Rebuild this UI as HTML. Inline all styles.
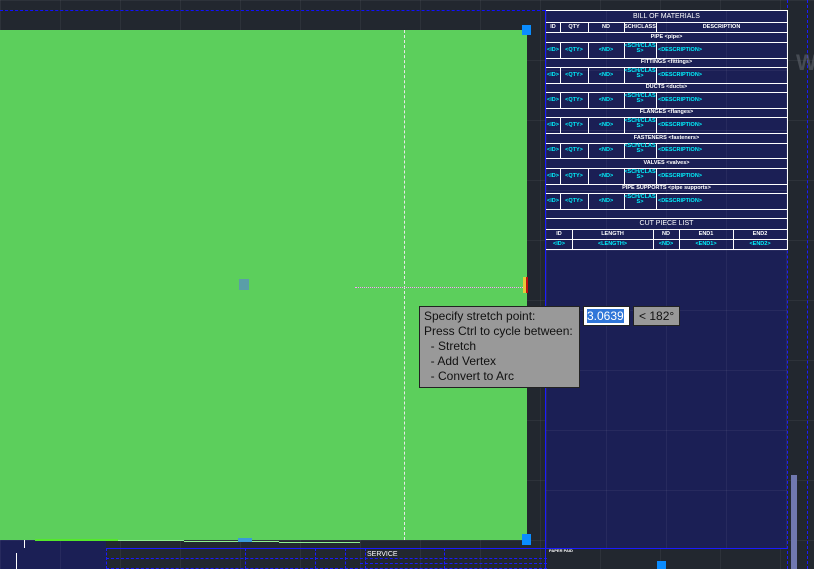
<!DOCTYPE html>
<html><head><meta charset="utf-8"><style>
*{margin:0;padding:0;box-sizing:border-box}
body{width:814px;height:569px;overflow:hidden;background:#22272f;position:relative;font-family:"Liberation Sans",sans-serif}
.a{position:absolute}
.grid{background-image:linear-gradient(90deg,rgba(255,255,255,.05) 1px,transparent 1px),linear-gradient(rgba(255,255,255,.05) 1px,transparent 1px);background-size:60px 60px}
.green{background-color:#5ccf5c}
.h{position:absolute;left:546px;width:241px;height:1px;background:#fff}
.v{position:absolute;width:1px;background:#fff}
.t{position:absolute;color:#fff;font-size:5.5px;font-weight:bold;text-align:center;line-height:10px;white-space:nowrap}
.c{position:absolute;color:#00f4ff;font-size:5.5px;font-weight:bold;text-align:center;line-height:5px;white-space:nowrap}
.tip{font-size:12px;color:#111;line-height:15px;white-space:nowrap}
</style></head><body>
<div class="a grid" style="left:0;top:0;width:814px;height:569px"></div>
<div class="a" style="left:0;top:10px;width:545px;height:1px;border-top:1px dashed #1010ff"></div>
<div class="a grid" style="left:546px;top:10px;width:241px;height:538px;background-color:#1b1f55"></div>
<div class="a" style="left:545px;top:10px;width:1px;height:559px;background:#1a1aff"></div>
<div class="a" style="left:787px;top:0;width:1px;height:569px;border-left:1px dashed #1a1aff"></div>
<div class="a" style="left:807px;top:0;width:1px;height:569px;border-left:1px dashed #1a1aff"></div>
<div class="a" style="left:791px;top:475px;width:6px;height:94px;background:#7078b0"></div>
<div class="a" style="left:796px;top:50px;font-size:22px;font-weight:bold;color:#6a6f78;opacity:.5">W</div>
<div class="h" style="top:10px"></div>
<div class="h" style="top:22px"></div><div class="h" style="top:32px"></div><div class="h" style="top:42px"></div><div class="h" style="top:58px"></div><div class="h" style="top:67px"></div><div class="h" style="top:83px"></div><div class="h" style="top:92px"></div><div class="h" style="top:108px"></div><div class="h" style="top:117px"></div><div class="h" style="top:133px"></div><div class="h" style="top:143px"></div><div class="h" style="top:158px"></div><div class="h" style="top:168px"></div><div class="h" style="top:184px"></div><div class="h" style="top:193px"></div><div class="h" style="top:209px"></div>
<div class="h" style="top:218px"></div><div class="h" style="top:229px"></div><div class="h" style="top:239px"></div><div class="h" style="top:249px"></div>
<div class="v" style="left:787px;top:10px;height:240px"></div>
<div class="v" style="left:560px;top:22px;height:10px"></div><div class="v" style="left:588px;top:22px;height:10px"></div><div class="v" style="left:624px;top:22px;height:10px"></div><div class="v" style="left:656px;top:22px;height:10px"></div>
<div class="v" style="left:560px;top:42px;height:16px"></div><div class="v" style="left:588px;top:42px;height:16px"></div><div class="v" style="left:624px;top:42px;height:16px"></div><div class="v" style="left:656px;top:42px;height:16px"></div>
<div class="v" style="left:560px;top:67px;height:16px"></div><div class="v" style="left:588px;top:67px;height:16px"></div><div class="v" style="left:624px;top:67px;height:16px"></div><div class="v" style="left:656px;top:67px;height:16px"></div>
<div class="v" style="left:560px;top:92px;height:16px"></div><div class="v" style="left:588px;top:92px;height:16px"></div><div class="v" style="left:624px;top:92px;height:16px"></div><div class="v" style="left:656px;top:92px;height:16px"></div>
<div class="v" style="left:560px;top:117px;height:16px"></div><div class="v" style="left:588px;top:117px;height:16px"></div><div class="v" style="left:624px;top:117px;height:16px"></div><div class="v" style="left:656px;top:117px;height:16px"></div>
<div class="v" style="left:560px;top:143px;height:15px"></div><div class="v" style="left:588px;top:143px;height:15px"></div><div class="v" style="left:624px;top:143px;height:15px"></div><div class="v" style="left:656px;top:143px;height:15px"></div>
<div class="v" style="left:560px;top:168px;height:16px"></div><div class="v" style="left:588px;top:168px;height:16px"></div><div class="v" style="left:624px;top:168px;height:16px"></div><div class="v" style="left:656px;top:168px;height:16px"></div>
<div class="v" style="left:560px;top:193px;height:16px"></div><div class="v" style="left:588px;top:193px;height:16px"></div><div class="v" style="left:624px;top:193px;height:16px"></div><div class="v" style="left:656px;top:193px;height:16px"></div>
<div class="v" style="left:572px;top:229px;height:20px"></div><div class="v" style="left:653px;top:229px;height:20px"></div><div class="v" style="left:679px;top:229px;height:20px"></div><div class="v" style="left:733px;top:229px;height:20px"></div>
<div class="t" style="left:546px;width:241px;top:11px;font-size:7px;font-weight:normal;line-height:11px">BILL OF MATERIALS</div>
<div class="t" style="left:546px;width:14px;top:22px">ID</div><div class="t" style="left:560px;width:28px;top:22px">QTY</div><div class="t" style="left:588px;width:36px;top:22px">ND</div><div class="t" style="left:624px;width:32px;top:22px">SCH/CLASS</div><div class="t" style="left:656px;width:131px;top:22px">DESCRIPTION</div>
<div class="t" style="left:546px;width:241px;top:32px">PIPE &lt;pipe&gt;</div>
<div class="t" style="left:546px;width:241px;top:58px;line-height:9px">FITTINGS &lt;fittings&gt;</div>
<div class="t" style="left:546px;width:241px;top:83px;line-height:9px">DUCTS &lt;ducts&gt;</div>
<div class="t" style="left:546px;width:241px;top:108px;line-height:9px">FLANGES &lt;flanges&gt;</div>
<div class="t" style="left:546px;width:241px;top:133px">FASTENERS &lt;fasteners&gt;</div>
<div class="t" style="left:546px;width:241px;top:158px">VALVES &lt;valves&gt;</div>
<div class="t" style="left:546px;width:241px;top:184px;line-height:9px">PIPE SUPPORTS &lt;pipe supports&gt;</div>
<div class="c" style="left:546px;width:14px;top:48px">&lt;ID&gt;</div><div class="c" style="left:560px;width:28px;top:48px">&lt;QTY&gt;</div><div class="c" style="left:588px;width:36px;top:48px">&lt;ND&gt;</div><div class="c" style="left:624px;width:32px;top:44px">&lt;SCH/CLAS<br>S&gt;</div><div class="c" style="left:658px;top:48px">&lt;DESCRIPTION&gt;</div>
<div class="c" style="left:546px;width:14px;top:73px">&lt;ID&gt;</div><div class="c" style="left:560px;width:28px;top:73px">&lt;QTY&gt;</div><div class="c" style="left:588px;width:36px;top:73px">&lt;ND&gt;</div><div class="c" style="left:624px;width:32px;top:69px">&lt;SCH/CLAS<br>S&gt;</div><div class="c" style="left:658px;top:73px">&lt;DESCRIPTION&gt;</div>
<div class="c" style="left:546px;width:14px;top:98px">&lt;ID&gt;</div><div class="c" style="left:560px;width:28px;top:98px">&lt;QTY&gt;</div><div class="c" style="left:588px;width:36px;top:98px">&lt;ND&gt;</div><div class="c" style="left:624px;width:32px;top:94px">&lt;SCH/CLAS<br>S&gt;</div><div class="c" style="left:658px;top:98px">&lt;DESCRIPTION&gt;</div>
<div class="c" style="left:546px;width:14px;top:123px">&lt;ID&gt;</div><div class="c" style="left:560px;width:28px;top:123px">&lt;QTY&gt;</div><div class="c" style="left:588px;width:36px;top:123px">&lt;ND&gt;</div><div class="c" style="left:624px;width:32px;top:119px">&lt;SCH/CLAS<br>S&gt;</div><div class="c" style="left:658px;top:123px">&lt;DESCRIPTION&gt;</div>
<div class="c" style="left:546px;width:14px;top:148px">&lt;ID&gt;</div><div class="c" style="left:560px;width:28px;top:148px">&lt;QTY&gt;</div><div class="c" style="left:588px;width:36px;top:148px">&lt;ND&gt;</div><div class="c" style="left:624px;width:32px;top:144px">&lt;SCH/CLAS<br>S&gt;</div><div class="c" style="left:658px;top:148px">&lt;DESCRIPTION&gt;</div>
<div class="c" style="left:546px;width:14px;top:174px">&lt;ID&gt;</div><div class="c" style="left:560px;width:28px;top:174px">&lt;QTY&gt;</div><div class="c" style="left:588px;width:36px;top:174px">&lt;ND&gt;</div><div class="c" style="left:624px;width:32px;top:170px">&lt;SCH/CLAS<br>S&gt;</div><div class="c" style="left:658px;top:174px">&lt;DESCRIPTION&gt;</div>
<div class="c" style="left:546px;width:14px;top:199px">&lt;ID&gt;</div><div class="c" style="left:560px;width:28px;top:199px">&lt;QTY&gt;</div><div class="c" style="left:588px;width:36px;top:199px">&lt;ND&gt;</div><div class="c" style="left:624px;width:32px;top:195px">&lt;SCH/CLAS<br>S&gt;</div><div class="c" style="left:658px;top:199px">&lt;DESCRIPTION&gt;</div>
<div class="t" style="left:546px;width:241px;top:219px;font-size:7px;font-weight:normal;line-height:10px">CUT PIECE LIST</div>
<div class="t" style="left:546px;width:26px;top:229px">ID</div><div class="t" style="left:572px;width:81px;top:229px">LENGTH</div><div class="t" style="left:653px;width:26px;top:229px">ND</div><div class="t" style="left:679px;width:54px;top:229px">END1</div><div class="t" style="left:733px;width:54px;top:229px">END2</div>
<div class="c" style="left:546px;width:26px;top:242px">&lt;ID&gt;</div><div class="c" style="left:572px;width:81px;top:242px">&lt;LENGTH&gt;</div><div class="c" style="left:653px;width:26px;top:242px">&lt;ND&gt;</div><div class="c" style="left:679px;width:54px;top:242px">&lt;END1&gt;</div><div class="c" style="left:733px;width:54px;top:242px">&lt;END2&gt;</div>
<div class="a grid" style="left:0;top:540px;width:106px;height:29px;background-color:#1b1f55"></div>
<div class="a" style="left:24px;top:540px;width:1px;height:8px;background:#fff"></div>
<div class="a" style="left:16px;top:553px;width:1px;height:16px;background:#fff"></div>
<div class="a" style="left:106px;top:548px;width:681px;height:1px;background:#1a1aff"></div>
<div class="a" style="left:106px;top:548px;width:1px;height:21px;border-left:1px dashed #1a1aff"></div>
<div class="a" style="left:106px;top:558px;width:441px;height:1px;border-top:1px dashed #1a1aff"></div>
<div class="a" style="left:360px;top:563px;width:187px;height:1px;border-top:1px dashed #1a1aff"></div>
<div class="a" style="left:106px;top:568px;width:441px;height:1px;border-top:1px dashed #1a1aff"></div>
<div class="a" style="left:245px;top:548px;width:1px;height:21px;border-left:1px dashed #1a1aff"></div>
<div class="a" style="left:315px;top:548px;width:1px;height:21px;border-left:1px dashed #1a1aff"></div>
<div class="a" style="left:345px;top:548px;width:1px;height:21px;border-left:1px dashed #1a1aff"></div>
<div class="a" style="left:365px;top:548px;width:1px;height:21px;border-left:1px dashed #1a1aff"></div>
<div class="a" style="left:444px;top:548px;width:1px;height:21px;border-left:1px dashed #1a1aff"></div>
<div class="a" style="left:367px;top:551px;color:#fff;font-size:7px">SERVICE</div>
<div class="a" style="left:549px;top:548px;color:#fff;font-size:4px;font-weight:bold">PAPER PAID</div>
<div class="a" style="left:657px;top:561px;width:9px;height:8px;background:#0a8cff"></div>
<div class="a green" style="left:0;top:30px;width:527px;height:510px"></div>
<div class="a" style="left:35px;top:539px;width:83px;height:2px;background:#55e82a"></div>
<div class="a" style="left:118px;top:540px;width:66px;height:1px;background:#8ef08e"></div>
<div class="a" style="left:184px;top:541px;width:95px;height:1px;background:#8ef08e"></div>
<div class="a" style="left:279px;top:542px;width:81px;height:1px;background:#8ef08e"></div>
<div class="a" style="left:404px;top:30px;width:1px;height:510px;border-left:1px dashed #e8e8e8"></div>
<div class="a" style="left:355px;top:287px;width:168px;height:1px;border-top:1px dotted #ff9cff"></div>
<div class="a" style="left:239px;top:279px;width:10px;height:11px;background:#5a9ea8"></div>
<div class="a" style="left:238px;top:538px;width:14px;height:4px;background:#3a9ad8"></div>
<div class="a" style="left:522px;top:25px;width:9px;height:10px;background:#0a8cff"></div>
<div class="a" style="left:522px;top:534px;width:9px;height:11px;background:#0a8cff"></div>
<div class="a" style="left:523px;top:277px;width:3px;height:16px;background:#e8c83a"></div>
<div class="a" style="left:526px;top:277px;width:2px;height:16px;background:#c01010"></div>
<div class="a tip" style="left:419px;top:306px;width:161px;height:82px;background:#999;border:1px solid #222;padding:2px 4px">Specify stretch point:<br>Press Ctrl to cycle between:<br>&nbsp;&nbsp;- Stretch<br>&nbsp;&nbsp;- Add Vertex<br>&nbsp;&nbsp;- Convert to Arc</div>
<div class="a tip" style="left:583px;top:306px;width:47px;height:20px;background:#fff;border:1px solid #222;padding:2px 3px"><span style="background:#3076d8;color:#fff">3.0639</span></div>
<div class="a tip" style="left:633px;top:306px;width:47px;height:20px;background:#999;border:1px solid #222;padding:2px 5px">&lt; 182°</div>
</body></html>
